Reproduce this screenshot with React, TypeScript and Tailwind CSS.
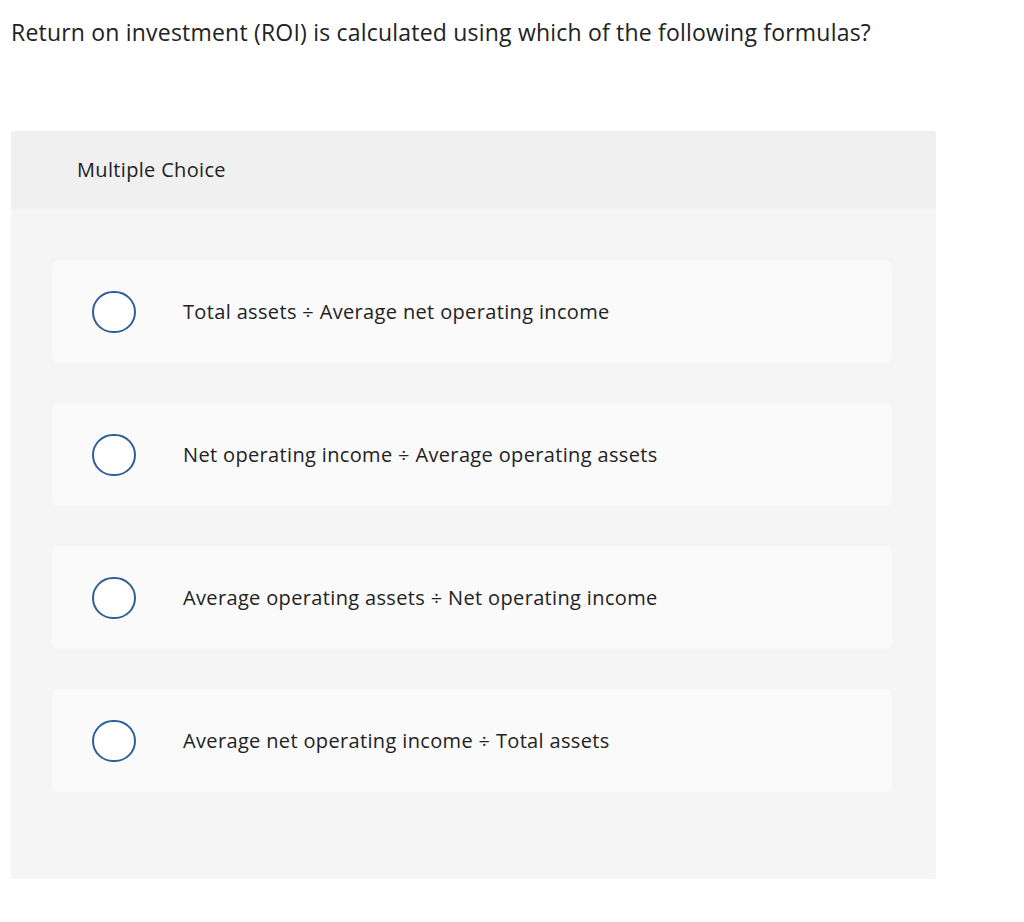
import React from 'react';

const options = [
  'Total assets ÷ Average net operating income',
  'Net operating income ÷ Average operating assets',
  'Average operating assets ÷ Net operating income',
  'Average net operating income ÷ Total assets',
];

export default function App() {
  return (
    <div className="min-h-screen bg-white text-[#222] font-['Open_Sans',sans-serif]">
      <div className="pl-[11px] pt-[17px]">
        <h1 className="text-[23px] leading-[30px] font-normal tracking-[0.2px]">
          Return on investment (ROI) is calculated using which of the following formulas?
        </h1>
      </div>

      <div className="mt-[84px] ml-[11px] w-[925px] h-[748px] rounded-[3px] bg-[#f5f5f5] overflow-hidden">
        <div className="h-[78px] bg-[#f0f0f0] flex items-center pl-[66px]">
          <span className="text-[20px] tracking-[0.33px]">Multiple Choice</span>
        </div>
        <div className="pt-[51px] pl-[41px] flex flex-col gap-[40px]">
          {options.map((o) => (
            <div key={o} className="w-[840px] h-[103px] rounded-[6px] bg-[#fafafa] flex items-center">
              <div className="ml-[40px] w-[44px] h-[42px] rounded-full border-2 border-[#2f5f99] bg-white shrink-0" />
              <span className="ml-[47px] text-[20px] tracking-[0.35px]">{o}</span>
            </div>
          ))}
        </div>
      </div>
    </div>
  );
}
